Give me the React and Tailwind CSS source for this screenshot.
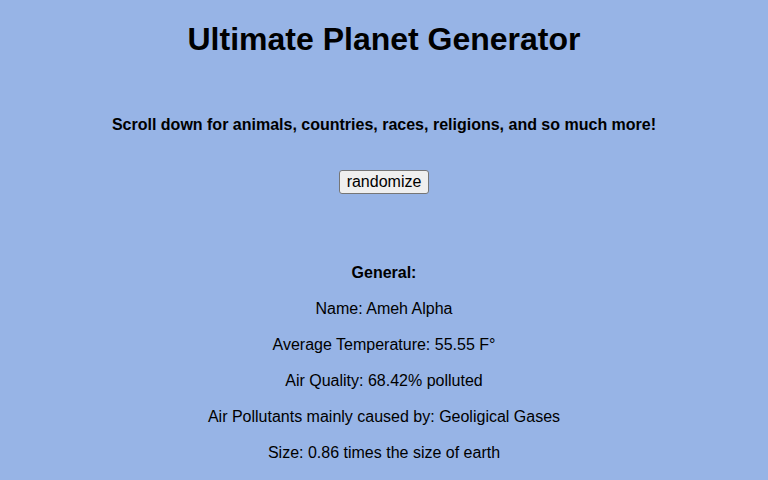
export default function App() {
  const rows = [
    "Name: Ameh Alpha",
    "Average Temperature: 55.55 F°",
    "Air Quality: 68.42% polluted",
    "Air Pollutants mainly caused by: Geoligical Gases",
    "Size: 0.86 times the size of earth",
  ];
  return (
    <div
      className="min-h-screen bg-[#97b4e6] text-black flex flex-col items-center text-center"
      style={{ fontFamily: '"Liberation Sans", Arial, sans-serif' }}
    >
      <h1 className="mt-[21px] text-[32px] leading-[37px] font-bold">Ultimate Planet Generator</h1>
      <p className="mt-[58px] text-[16px] leading-[18px] font-bold">
        Scroll down for animals, countries, races, religions, and so much more!
      </p>
      <button className="mt-[36px] h-[24px] px-[7px] text-[16px] leading-[18px] bg-[#efefef] border border-[#767676] rounded-[3px]">
        randomize
      </button>
      <p className="mt-[70px] text-[16px] leading-[18px] font-bold">General:</p>
      {rows.map((r) => (
        <p key={r} className="mt-[18px] text-[16px] leading-[18px]">
          {r}
        </p>
      ))}
    </div>
  );
}
